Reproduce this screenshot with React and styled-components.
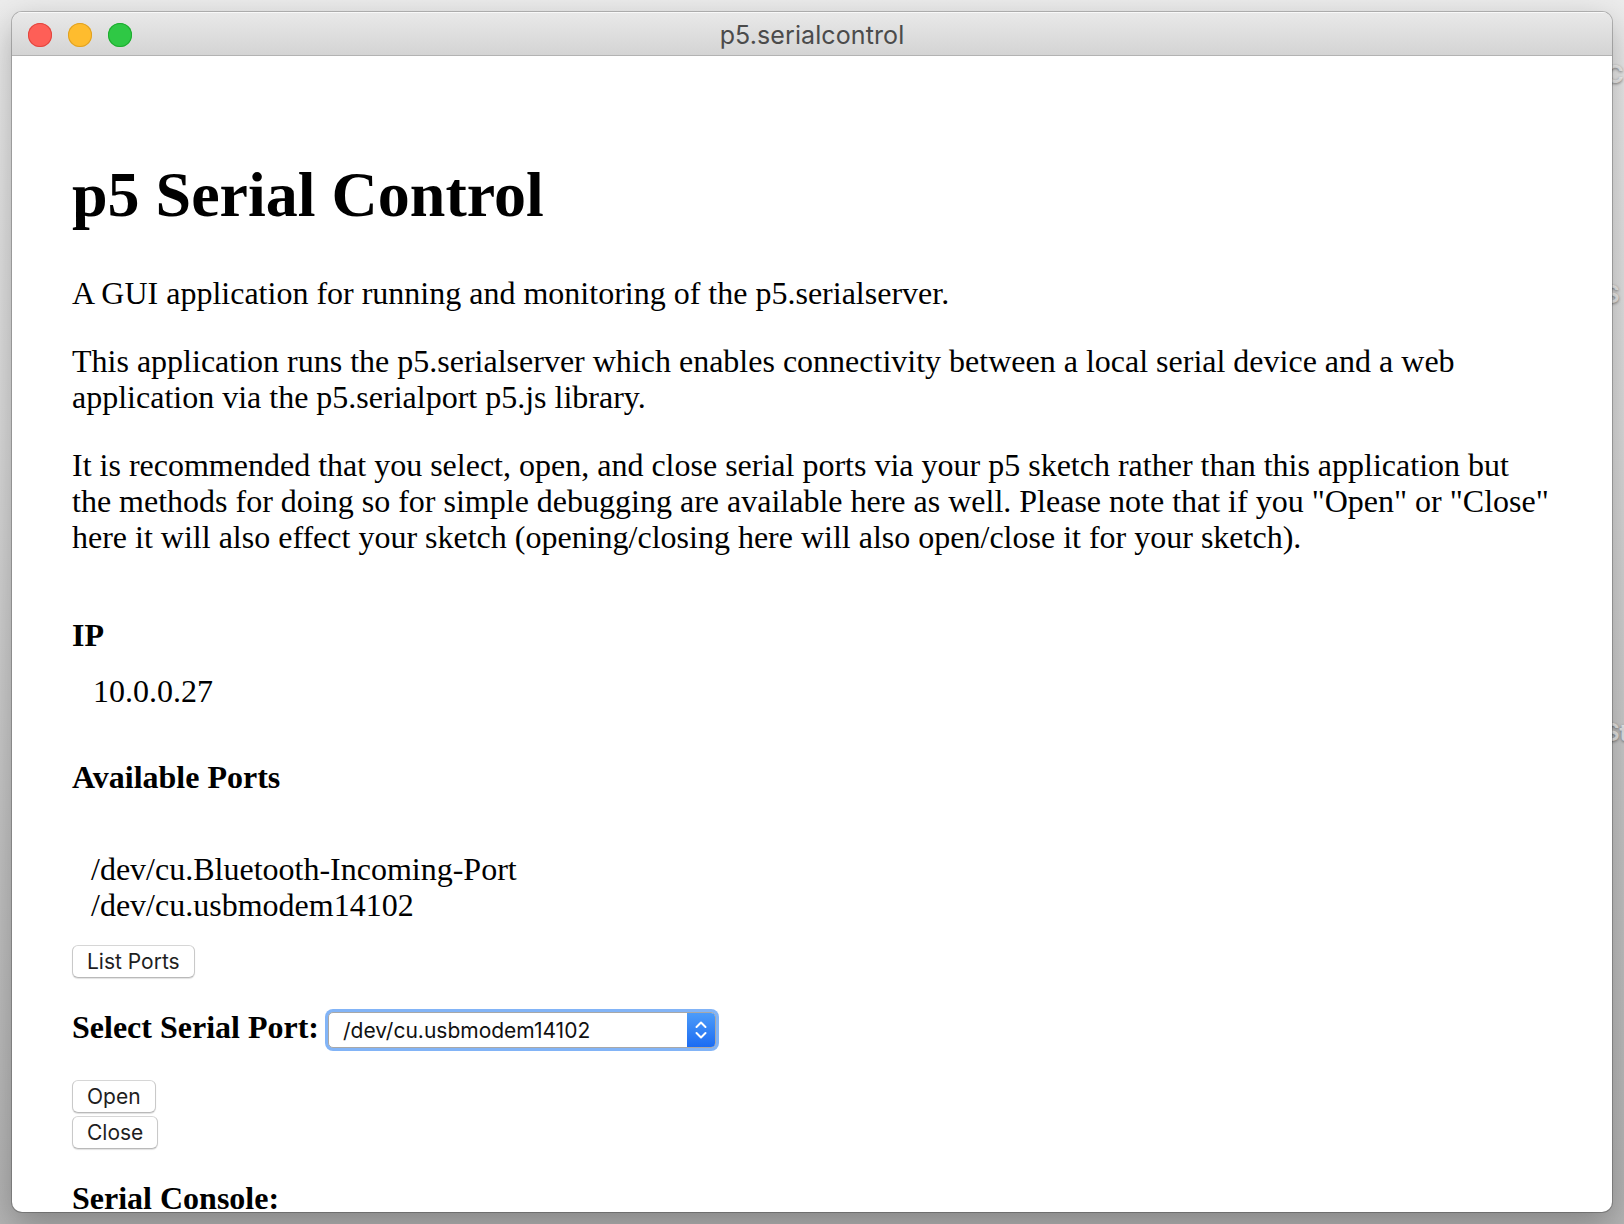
import React from "react";
import styled, { createGlobalStyle } from "styled-components";

const GlobalStyle = createGlobalStyle`
  html, body {
    margin: 0;
    padding: 0;
    width: 1624px;
    height: 1224px;
    overflow: hidden;
  }
  * { box-sizing: border-box; }
`;

const Desktop = styled.div`
  position: relative;
  width: 1624px;
  height: 1224px;
  padding: 12px;
  overflow: hidden;
  background: linear-gradient(180deg, #ececec 0%, #dcdcdc 35%, #c4c4c4 70%, #b4b4b4 100%);
`;

const DesktopLabel = styled.span`
  position: absolute;
  left: ${(p) => p.$left}px;
  top: ${(p) => p.$top}px;
  font-family: "Inter", "Liberation Sans", sans-serif;
  font-size: 24px;
  font-weight: 600;
  color: rgba(255, 255, 255, 0.75);
  text-shadow: 0 1px 3px rgba(0, 0, 0, 0.45);
  white-space: nowrap;
  z-index: 0;
`;

const Window = styled.div`
  position: relative;
  z-index: 1;
  width: 1600px;
  height: 1200px;
  display: flex;
  flex-direction: column;
  border-radius: 10px;
  overflow: hidden;
  background: #ffffff;
  box-shadow: 0 0 0 1px rgba(0, 0, 0, 0.22), 0 12px 34px rgba(0, 0, 0, 0.28);
`;

const TitleBar = styled.div`
  flex: 0 0 44px;
  display: grid;
  grid-template-columns: 1fr auto 1fr;
  align-items: center;
  background: linear-gradient(180deg, #e9e9e9 0%, #d4d4d4 100%);
  border-bottom: 1px solid #b3b3b3;
  box-shadow: inset 0 1px 0 rgba(255, 255, 255, 0.7);
`;

const Lights = styled.div`
  display: flex;
  gap: 16px;
  padding-left: 16px;
  padding-top: 2px;
`;

const Light = styled.span`
  width: 24px;
  height: 24px;
  border-radius: 50%;
  background: ${(p) => p.$fill};
  box-shadow: inset 0 0 0 1px ${(p) => p.$edge};
`;

const Title = styled.div`
  font-family: "Inter", "Liberation Sans", sans-serif;
  font-size: 25px;
  color: #4b4b4b;
  letter-spacing: 0.1px;
  padding-top: 2px;
`;

const Content = styled.main`
  flex: 1;
  overflow: hidden;
  display: flex;
  flex-direction: column;
  align-items: flex-start;
  padding: 0 60px;
  font-family: "Liberation Serif", "Times New Roman", serif;
  font-size: 32px;
  line-height: 36px;
  color: #000;
`;

const Heading = styled.h1`
  margin: 103px 0 0;
  font-size: 64px;
  line-height: 72px;
  font-weight: 700;
`;

const Para = styled.p`
  margin: ${(p) => p.$mt}px 0 0;
  max-width: 1480px;
`;

const SubHeading = styled.h4`
  margin: ${(p) => p.$mt}px 0 0;
  font-size: 32px;
  line-height: 36px;
  font-weight: 700;
`;

const IndentBlock = styled.div`
  margin-top: ${(p) => p.$mt}px;
  padding-left: 21px;
`;

const PortLine = styled.div`
  padding-left: 19px;
`;

const PortList = styled.div`
  margin-top: 56px;
  display: flex;
  flex-direction: column;
`;

const Button = styled.button`
  margin: ${(p) => p.$mt}px 0 0;
  height: 33px;
  padding: 0 14px;
  background: #ffffff;
  border: 1px solid #c9c9c9;
  border-top-color: #d6d6d6;
  border-bottom-color: #b9b9b9;
  border-radius: 6px;
  box-shadow: 0 1px 1px rgba(0, 0, 0, 0.12);
  font-family: "Inter", "Liberation Sans", sans-serif;
  font-size: 21px;
  line-height: 31px;
  color: #1e1e1e;
`;

const SelectRow = styled.div`
  margin-top: 31px;
  display: flex;
  align-items: flex-start;
  gap: 9px;
`;

const Label = styled.label`
  font-weight: 700;
  white-space: nowrap;
`;

const SelectFrame = styled.div`
  margin-top: 3px;
  width: 388px;
  height: 36px;
  display: flex;
  border: 1px solid #a8a8a8;
  border-radius: 5px;
  background: #fff;
  box-shadow: 0 0 0 3px #82b4f7;
  overflow: hidden;
`;

const NativeSelect = styled.select`
  flex: 1;
  appearance: none;
  -webkit-appearance: none;
  border: none;
  outline: none;
  background: transparent;
  padding: 0 0 0 14px;
  margin: 0;
  font-family: "Inter", "Liberation Sans", sans-serif;
  font-size: 21px;
  color: #111;
  height: 100%;
`;

const Stepper = styled.span`
  flex: 0 0 28px;
  display: flex;
  align-items: center;
  justify-content: center;
  background: linear-gradient(180deg, #4d9cf9 0%, #1c6cf2 100%);
`;

export default function App() {
  return (
    <>
      <GlobalStyle />
      <Desktop>
        <DesktopLabel $left={1606} $top={60}>C</DesktopLabel>
        <DesktopLabel $left={1604} $top={280}>S</DesktopLabel>
        <DesktopLabel $left={1604} $top={718}>St</DesktopLabel>
        <Window>
          <TitleBar>
            <Lights>
              <Light $fill="#fe5f57" $edge="#e1463f" />
              <Light $fill="#febc2e" $edge="#dfa124" />
              <Light $fill="#2fc845" $edge="#1eab2f" />
            </Lights>
            <Title>p5.serialcontrol</Title>
            <span />
          </TitleBar>
          <Content>
            <Heading>p5 Serial Control</Heading>
            <Para $mt={44}>
              A GUI application for running and monitoring of the p5.serialserver.
            </Para>
            <Para $mt={32}>
              This application runs the p5.serialserver which enables connectivity between a
              local serial device and a web application via the p5.serialport p5.js library.
            </Para>
            <Para $mt={32}>
              It is recommended that you select, open, and close serial ports via your p5 sketch
              rather than this application but the methods for doing so for simple debugging are
              available here as well. Please note that if you "Open" or "Close" here it will also
              effect your sketch (opening/closing here will also open/close it for your sketch).
            </Para>
            <SubHeading $mt={62}>IP</SubHeading>
            <IndentBlock $mt={20}>10.0.0.27</IndentBlock>
            <SubHeading $mt={50}>Available Ports</SubHeading>
            <PortList>
              <PortLine>/dev/cu.Bluetooth-Incoming-Port</PortLine>
              <PortLine>/dev/cu.usbmodem14102</PortLine>
            </PortList>
            <Button $mt={22}>List Ports</Button>
            <SelectRow>
              <Label htmlFor="port">Select Serial Port:</Label>
              <SelectFrame>
                <NativeSelect id="port" defaultValue="/dev/cu.usbmodem14102">
                  <option>/dev/cu.Bluetooth-Incoming-Port</option>
                  <option>/dev/cu.usbmodem14102</option>
                </NativeSelect>
                <Stepper>
                  <svg width="14" height="24" viewBox="0 0 14 24" fill="none">
                    <path d="M2.5 9 L7 4.5 L11.5 9" stroke="#fff" strokeWidth="2" strokeLinecap="round" strokeLinejoin="round" />
                    <path d="M2.5 15 L7 19.5 L11.5 15" stroke="#fff" strokeWidth="2" strokeLinecap="round" strokeLinejoin="round" />
                  </svg>
                </Stepper>
              </SelectFrame>
            </SelectRow>
            <Button $mt={32}>Open</Button>
            <Button $mt={3}>Close</Button>
            <SubHeading $mt={31}>Serial Console:</SubHeading>
          </Content>
        </Window>
      </Desktop>
    </>
  );
}
